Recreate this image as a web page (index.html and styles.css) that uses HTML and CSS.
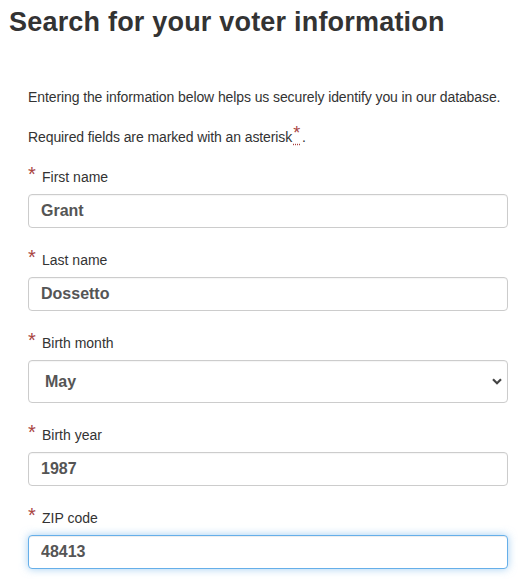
FILE: index.html
```html
<!DOCTYPE html>
<html lang="en">
<head>
<meta charset="utf-8">
<title>Search for your voter information</title>
<link rel="stylesheet" href="styles.css">
</head>
<body>
<h1 class="page-title">Search for your voter information</h1>
<form class="voter-form">
  <p class="intro">Entering the information below helps us securely identify you in our database.</p>
  <p class="intro">Required fields are marked with an asterisk<abbr class="req-abbr" title="required"><span class="req-star">*</span></abbr>.</p>

  <div class="form-group">
    <label class="field-label" for="first"><span class="star">*</span>First name</label>
    <input class="field-input" id="first" type="text" value="Grant">
  </div>

  <div class="form-group">
    <label class="field-label" for="last"><span class="star">*</span>Last name</label>
    <input class="field-input" id="last" type="text" value="Dossetto">
  </div>

  <div class="form-group">
    <label class="field-label" for="month"><span class="star">*</span>Birth month</label>
    <div class="select-wrap">
      <select class="field-select" id="month">
        <option>January</option>
        <option>February</option>
        <option>March</option>
        <option>April</option>
        <option selected>May</option>
        <option>June</option>
      </select>
      <svg class="chevron" width="10" height="7" viewBox="0 0 10 7"><path d="M1 1.2 L5 5.2 L9 1.2" fill="none" stroke="#444" stroke-width="2.2"/></svg>
    </div>
  </div>

  <div class="form-group">
    <label class="field-label" for="year"><span class="star">*</span>Birth year</label>
    <input class="field-input" id="year" type="text" value="1987">
  </div>

  <div class="form-group">
    <label class="field-label" for="zip"><span class="star">*</span>ZIP code</label>
    <input class="field-input is-focus" id="zip" type="text" value="48413">
  </div>
</form>
</body>
</html>
```

FILE: styles.css
```css
html, body {
  margin: 0;
  padding: 0;
  background: #fff;
}
body {
  font-family: "Liberation Sans", Arial, sans-serif;
  color: #333;
}
.page-title {
  margin: 0;
  padding: 7px 0 0 9px;
  font-size: 27px;
  line-height: 30px;
  letter-spacing: 0.2px;
  font-weight: bold;
  color: #333;
}
.voter-form {
  width: 480px;
  margin: 0 0 0 28px;
  padding-top: 50px;
}
.intro {
  margin: 0 0 20px 0;
  font-size: 14px;
  line-height: 20px;
  white-space: nowrap;
  letter-spacing: -0.1px;
}
.req-abbr {
  text-decoration: underline dotted #a94442;
  text-underline-offset: 2px;
  padding: 0 2px 0 1px;
  cursor: help;
}
.req-star {
  color: #a94442;
  font-size: 18px;
  line-height: 0;
  position: relative;
  top: -3px;
}
.form-group {
  margin-bottom: 22px;
}
.field-label {
  display: block;
  font-size: 14px;
  line-height: 20px;
  margin-bottom: 7px;
  color: #333;
}
.star {
  display: inline-block;
  width: 14px;
  color: #a94442;
  font-size: 20px;
  line-height: 0;
  position: relative;
  top: -1px;
}
.field-input,
.field-select {
  display: block;
  box-sizing: border-box;
  width: 480px;
  height: 34px;
  margin: 0;
  padding: 0 12px;
  font-family: "Liberation Sans", Arial, sans-serif;
  font-size: 16px;
  font-weight: bold;
  color: #555;
  background: #fff;
  border: 1px solid #ccc;
  border-radius: 4px;
  box-shadow: inset 0 1px 1px rgba(0,0,0,.04);
  outline: none;
}
.field-select {
  height: 43px;
  padding: 0 16px;
  -webkit-appearance: none;
  appearance: none;
}
.select-wrap {
  position: relative;
}
.chevron {
  position: absolute;
  right: 6px;
  top: 18px;
  pointer-events: none;
}
.field-input.is-focus {
  border-color: #66afe9;
  box-shadow: inset 0 1px 1px rgba(0,0,0,.075), 0 0 8px rgba(102,175,233,.6);
}
```
